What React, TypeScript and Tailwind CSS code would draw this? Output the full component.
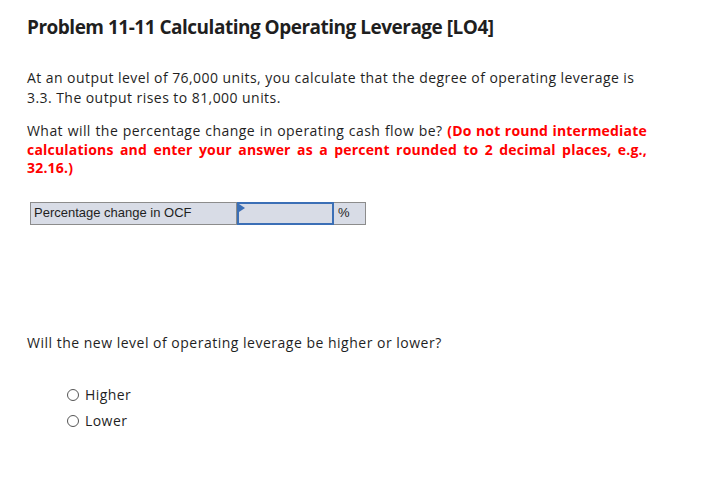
import React from "react";

export default function App() {
  return (
    <div className="w-[723px] h-[500px] bg-white text-[#1f1f1f]" style={{ fontFamily: '"Open Sans", sans-serif' }}>
      <div className="pl-[27px] pr-[76px] pt-[14px]">
        <h1 className="text-[19px] leading-[26px] font-bold tracking-[-0.5px]">Problem 11-11 Calculating Operating Leverage [LO4]</h1>
        <p className="mt-[28px] text-[14px] leading-[20px] tracking-[0.44px]">
          At an output level of 76,000 units, you calculate that the degree of operating leverage is 3.3. The output rises to 81,000 units.
        </p>
        <p className="mt-[14px] text-[14px] leading-[18.5px] tracking-[0.44px] text-justify">
          What will the percentage change in operating cash flow be?{" "}
          <span className="font-bold text-[#ff0000] tracking-[0.2px]">(Do not round intermediate calculations and enter your answer as a percent rounded to 2 decimal places, e.g., 32.16.)</span>
        </p>
        <div className="mt-[24px] ml-[3px] flex w-[336px] h-[23px] border border-[#8c8c8c] bg-[#d8dce6] text-[13px]" style={{ fontFamily: '"Liberation Sans", Arial, sans-serif' }}>
          <div className="w-[206px] px-[3px] flex items-center border-r border-[#8c8c8c]">Percentage change in OCF</div>
          <div className="relative w-[97px] border-2 border-[#3b6fb6] -my-px">
            <div className="absolute left-0 top-0 w-0 h-0 border-t-[4px] border-b-[4px] border-l-[6px] border-t-transparent border-b-transparent border-l-[#3b6fb6]" />
          </div>
          <div className="flex-1 px-[4px] flex items-center">%</div>
        </div>
        <p className="mt-[108px] text-[14px] leading-[20px] tracking-[0.5px]">Will the new level of operating leverage be higher or lower?</p>
        <div className="mt-[32px] ml-[40px] flex flex-col gap-[6px] text-[14px] tracking-[0.44px]">
          <label className="flex items-center gap-[6px] leading-[20px]">
            <span className="w-[12px] h-[12px] rounded-full border border-[#555] bg-white" />
            Higher
          </label>
          <label className="flex items-center gap-[6px] leading-[20px]">
            <span className="w-[12px] h-[12px] rounded-full border border-[#555] bg-white" />
            Lower
          </label>
        </div>
      </div>
    </div>
  );
}
